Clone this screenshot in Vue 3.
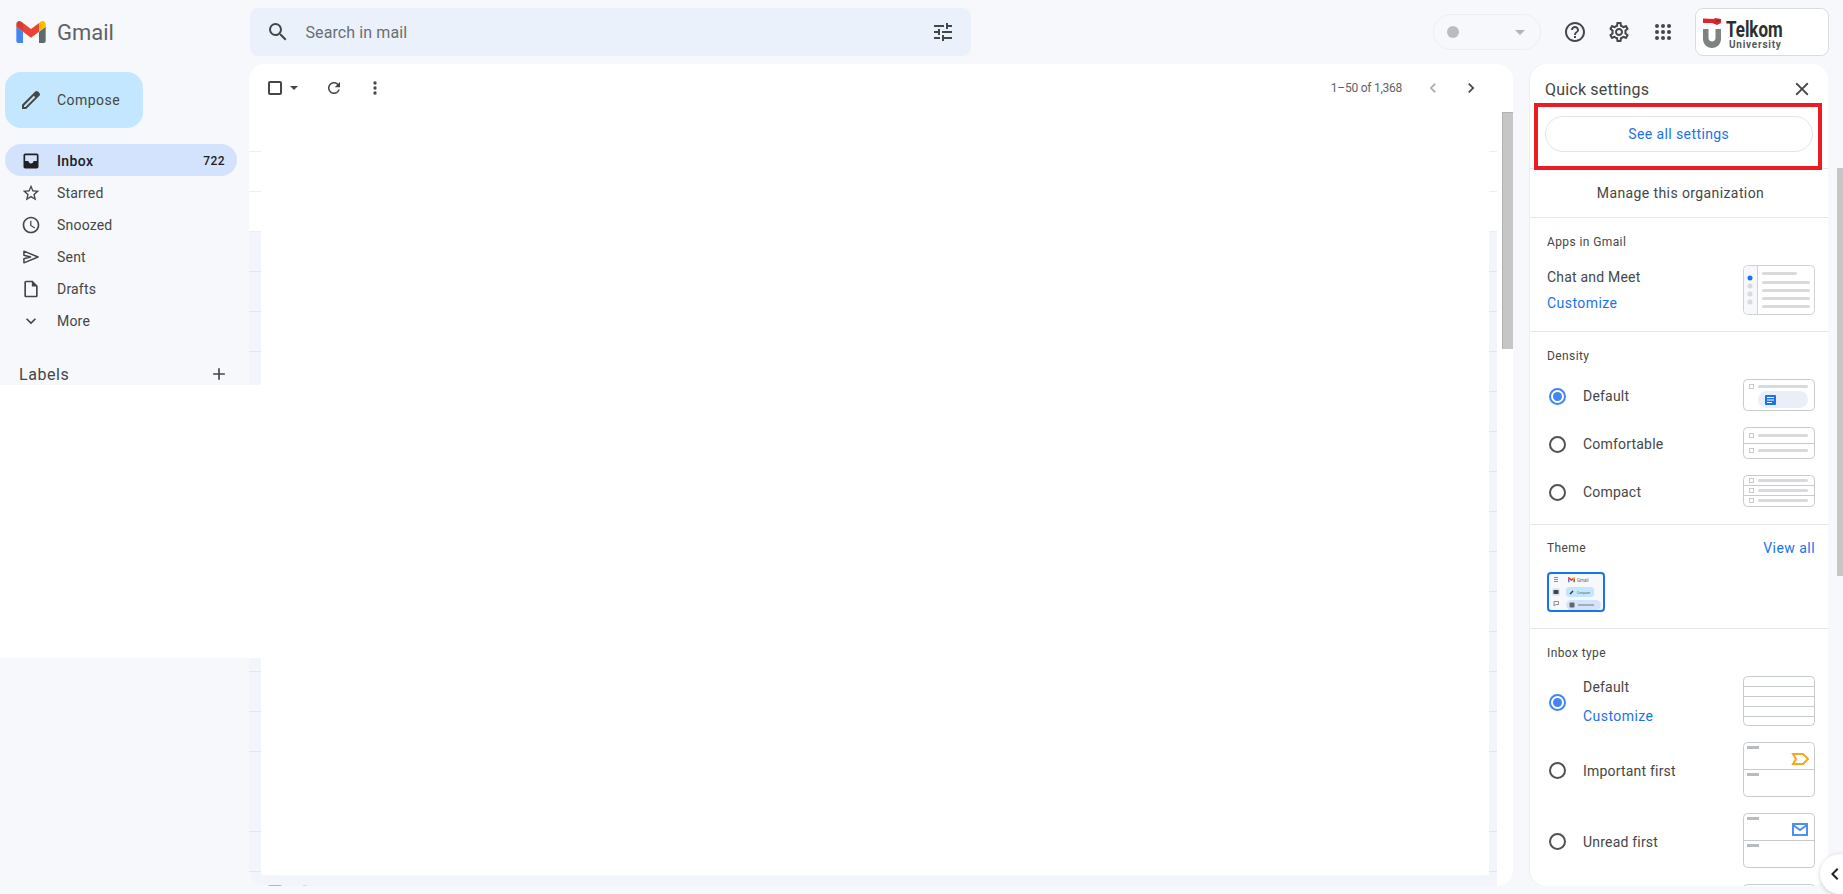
<script setup>
const navItems = [
  { label: "Inbox", count: 722, active: true, icon: "M19 3H5c-1.1 0-2 .9-2 2v14c0 1.1.9 2 2 2h14c1.1 0 2-.9 2-2V5c0-1.1-.9-2-2-2zm0 9h-4c0 1.66-1.35 3-3 3s-3-1.34-3-3H5V5h14v7z" },
  { label: "Starred", icon: "M22 9.24l-7.19-.62L12 2 9.19 8.63 2 9.24l5.46 4.73L5.82 21 12 17.27 18.18 21l-1.63-7.03L22 9.24zM12 15.4l-3.76 2.27 1-4.28-3.32-2.88 4.38-.38L12 6.1l1.71 4.04 4.38.38-3.32 2.88 1 4.28L12 15.4z" },
  { label: "Snoozed", icon: "M11.99 2C6.47 2 2 6.48 2 12s4.47 10 9.99 10C17.52 22 22 17.52 22 12S17.52 2 11.99 2zM12 20c-4.42 0-8-3.58-8-8s3.58-8 8-8 8 3.58 8 8-3.58 8-8 8zm.5-13H11v6l5.25 3.15.75-1.23-4.5-2.67z" },
  { label: "Sent", outline: true, icon: "M3.500 5L20.500 12L3.500 19V14.200L11.500 12L3.500 9.800z" },
  { label: "Drafts", icon: "M14 2H6c-1.1 0-1.99.9-1.99 2L4 20c0 1.1.89 2 1.99 2H18c1.1 0 2-.9 2-2V8l-6-6zM6 20V4h7v5h5v11H6z" },
  { label: "More", icon: "M16.59 8.59L12 13.17 7.41 8.59 6 10l6 6 6-6z" },
];

// rows sit behind the white cover, only their edges show
const rows = Array.from({ length: 20 }, (_, i) => ({
  id: i,
  read: i < 3,
  noLine: i === 16,
}));

const densities = [
  { id: "default", label: "Default", checked: true },
  { id: "comfortable", label: "Comfortable" },
  { id: "compact", label: "Compact" },
];

// the fourth type is only visible as the top edge of its preview
const inboxTypes = [
  { id: "default", label: "Default", link: "Customize", checked: true },
  { id: "important", label: "Important first" },
  { id: "unread", label: "Unread first" },
  { id: "next", label: "" },
];
</script>

<template>
  <div class="app">
    <header class="topbar">
      <div class="brand">
        <svg class="gmail-logo" viewBox="52 42 88 66">
          <path fill="#4285f4" d="M58 108h14V74L52 59v43c0 3.32 2.69 6 6 6" />
          <path fill="#5f6b68" d="M120 108h14c3.32 0 6-2.69 6-6V59l-20 15" />
          <path fill="#fbbc04" d="M120 48v26l20-15v-8c0-7.42-8.47-11.65-14.4-7.2" />
          <path fill="#ea4335" d="M72 74V48l24 18 24-18v26L96 92" />
          <path fill="#db3a2f" d="M52 51v8l20 15V48l-5.6-4.2c-5.94-4.45-14.4-.22-14.4 7.2" />
        </svg>
        <span class="brand-name">Gmail</span>
      </div>
      <div class="search">
        <svg class="icon" viewBox="0 0 24 24"><path d="M15.5 14h-.79l-.28-.27A6.471 6.471 0 0 0 16 9.5 6.5 6.5 0 1 0 9.5 16c1.61 0 3.09-.59 4.23-1.57l.27.28v.79l5 4.99L20.49 19l-4.99-5zm-6 0C7.01 14 5 11.99 5 9.5S7.01 5 9.5 5 14 7.01 14 9.5 11.99 14 9.5 14z" /></svg>
        <span class="search-text">Search in mail</span>
        <svg class="icon tune" viewBox="0 0 24 24"><path d="M3 17v2h6v-2H3zM3 5v2h10V5H3zm10 16v-2h8v-2h-8v-2h-2v6h2zM7 9v2H3v2h4v2h2V9H7zm14 4v-2H11v2h10zm-6-4h2V7h4V5h-4V3h-2v6z" /></svg>
      </div>
      <div class="top-right">
        <div class="status">
          <span class="status-dot"></span>
          <span class="caret status-caret"></span>
        </div>
        <svg class="icon top-icon" viewBox="0 0 24 24"><path d="M11 18h2v-2h-2v2zm1-16C6.48 2 2 6.48 2 12s4.48 10 10 10 10-4.48 10-10S17.52 2 12 2zm0 18c-4.41 0-8-3.59-8-8s3.59-8 8-8 8 3.59 8 8-3.59 8-8 8zm0-14c-2.21 0-4 1.79-4 4h2c0-1.1.9-2 2-2s2 .9 2 2c0 2-3 1.75-3 5h2c0-2.25 3-2.5 3-5 0-2.21-1.79-4-4-4z" /></svg>
        <svg class="icon top-icon" viewBox="0 0 24 24"><path d="M19.43 12.98c.04-.32.07-.64.07-.98 0-.34-.03-.66-.07-.98l2.11-1.65c.19-.15.24-.42.12-.64l-2-3.46c-.09-.16-.26-.25-.44-.25-.06 0-.12.01-.17.03l-2.49 1c-.52-.4-1.08-.73-1.69-.98l-.38-2.65C14.46 2.18 14.25 2 14 2h-4c-.25 0-.46.18-.49.42l-.38 2.65c-.61.25-1.17.59-1.69.98l-2.49-1c-.06-.02-.12-.03-.18-.03-.17 0-.34.09-.43.25l-2 3.46c-.13.22-.07.49.12.64l2.11 1.65c-.04.32-.07.65-.07.98 0 .33.03.66.07.98l-2.11 1.65c-.19.15-.24.42-.12.64l2 3.46c.09.16.26.25.44.25.06 0 .12-.01.17-.03l2.49-1c.52.4 1.08.73 1.69.98l.38 2.65c.03.24.24.42.49.42h4c.25 0 .46-.18.49-.42l.38-2.65c.61-.25 1.17-.59 1.69-.98l2.49 1c.06.02.12.03.18.03.17 0 .34-.09.43-.25l2-3.46c.12-.22.07-.49-.12-.64l-2.11-1.65zm-1.98-1.71c.04.31.05.52.05.73 0 .21-.02.43-.05.73l-.14 1.13.89.7 1.08.84-.7 1.21-1.27-.51-1.04-.42-.9.68c-.43.32-.84.56-1.25.73l-1.06.43-.16 1.13-.2 1.35h-1.4l-.19-1.35-.16-1.13-1.06-.43c-.43-.18-.83-.41-1.23-.71l-.91-.7-1.06.43-1.27.51-.7-1.21 1.08-.84.89-.7-.14-1.13c-.03-.31-.05-.54-.05-.74s.02-.43.05-.73l.14-1.13-.89-.7-1.08-.84.7-1.21 1.27.51 1.04.42.9-.68c.43-.32.84-.56 1.25-.73l1.06-.43.16-1.13.2-1.35h1.39l.19 1.35.16 1.13 1.06.43c.43.18.83.41 1.23.71l.91.7 1.06-.43 1.27-.51.7 1.21-1.07.85-.89.7.14 1.13zM12 8c-2.21 0-4 1.79-4 4s1.79 4 4 4 4-1.79 4-4-1.79-4-4-4zm0 6c-1.1 0-2-.9-2-2s.9-2 2-2 2 .9 2 2-.9 2-2 2z" /></svg>
        <svg class="icon top-icon" viewBox="0 0 24 24">
          <circle v-for="n in 9" :key="n" :cx="6 + ((n - 1) % 3) * 6" :cy="6 + Math.floor((n - 1) / 3) * 6" r="2" />
        </svg>
        <div class="org-logo">
          <svg class="org-mark" viewBox="0 0 18 30">
            <path fill="#e5202a" d="M0 .5L11 1l1-1 6 1v4l-4 2-5-2H0z" />
            <circle cx="13.500" cy="3.500" r=".8" fill="#333" />
            <circle cx="15.500" cy="2.500" r=".8" fill="#333" />
            <path fill="#7e8281" d="M0 11h5.500v9c0 2.200 1.600 3.500 3.500 3.500s3.500-1.300 3.500-3.500v-9H18v10c0 5-4 9-9 9s-9-4-9-9z" />
          </svg>
          <div class="org-text">
            <span class="org-title">Telkom</span>
            <span class="org-sub">University</span>
          </div>
        </div>
      </div>
    </header>

    <div class="body">
      <nav class="nav">
        <button class="compose">
          <svg class="icon" viewBox="0 0 24 24"><path d="M20.41 4.94l-1.35-1.35c-.78-.78-2.05-.78-2.83 0L3 16.82V21h4.18L20.41 7.77c.79-.78.79-2.05 0-2.83zm-14 14.12L5 19v-1.36l9.82-9.82 1.41 1.41-9.82 9.83z" /></svg>
          <span>Compose</span>
        </button>
        <ul class="nav-list">
          <li v-for="item in navItems" :key="item.label" :class="{ active: item.active }">
            <svg class="icon nav-icon" viewBox="0 0 24 24"><path :d="item.icon" :class="{ outline: item.outline }" /></svg>
            <span class="nav-label">{{ item.label }}</span>
            <span v-if="item.count" class="nav-count">{{ item.count }}</span>
          </li>
        </ul>
        <div class="labels">
          <span>Labels</span>
          <svg class="icon" viewBox="0 0 24 24"><path d="M19 13h-6v6h-2v-6H5v-2h6V5h2v6h6v2z" /></svg>
        </div>
      </nav>

      <main class="mail">
        <div class="toolbar">
          <span class="checkbox"></span>
          <span class="caret"></span>
          <svg class="icon tool refresh" viewBox="0 0 24 24"><path d="M17.65 6.35C16.2 4.9 14.21 4 12 4c-4.42 0-7.99 3.58-7.99 8s3.57 8 7.99 8c3.73 0 6.84-2.55 7.73-6h-2.08c-.82 2.33-3.04 4-5.65 4-3.31 0-6-2.69-6-6s2.69-6 6-6c1.66 0 3.14.69 4.22 1.78L13 11h7V4l-2.35 2.35z" /></svg>
          <svg class="icon tool dots" viewBox="0 0 24 24"><circle cx="12" cy="6" r="2" /><circle cx="12" cy="12" r="2" /><circle cx="12" cy="18" r="2" /></svg>
          <span class="range">1–50 of 1,368</span>
          <svg class="icon tool prev" viewBox="0 0 24 24"><path d="M15.41 7.41L14 6l-6 6 6 6 1.41-1.41L10.83 12z" /></svg>
          <svg class="icon tool next" viewBox="0 0 24 24"><path d="M10 6L8.59 7.41 13.17 12l-4.58 4.59L10 18l6-6z" /></svg>
        </div>
        <div class="list-wrap">
          <ul class="rows">
            <li v-for="row in rows" :key="row.id" :class="{ read: row.read, 'no-line': row.noLine }">
              <span class="checkbox row-check"></span>
              <span class="row-star"></span>
            </li>
          </ul>
          <div class="gutter"><span class="thumb"></span></div>
        </div>
      </main>

      <aside class="settings">
        <div class="settings-head">
          <span>Quick settings</span>
          <svg class="icon" viewBox="0 0 24 24"><path d="M19 6.41L17.59 5 12 10.59 6.41 5 5 6.41 10.59 12 5 17.59 6.41 19 12 13.41 17.59 19 19 17.59 13.41 12z" /></svg>
        </div>
        <section class="see-all">
          <button class="see-all-btn">See all settings</button>
          <span class="highlight"></span>
        </section>
        <section class="manage">Manage this organization</section>

        <section class="group">
          <h3>Apps in Gmail</h3>
          <div class="option apps">
            <div class="option-text">
              <span>Chat and Meet</span>
              <a>Customize</a>
            </div>
            <svg class="preview" width="72" height="50" viewBox="0 0 72 50">
              <rect x=".5" y=".5" width="71" height="49" rx="4" fill="#fff" stroke="#d0d3d6" />
              <path d="M1 5a4 4 0 0 1 4-4h9v48H5a4 4 0 0 1-4-4z" fill="#f6f8fc" />
              <path d="M14.500 1v48" stroke="#d0d3d6" />
              <circle cx="7" cy="13" r="2.500" fill="#1a73e8" />
              <circle cx="7" cy="21" r="2.500" fill="#d8dadd" />
              <circle cx="7" cy="29" r="2.500" fill="#d8dadd" />
              <circle cx="7" cy="37" r="2.500" fill="#d8dadd" />
              <rect x="19" y="7" width="35" height="3" rx="1.500" fill="#d8dadd" />
              <rect x="19" y="16" width="48" height="3" rx="1.500" fill="#d8dadd" />
              <rect x="19" y="24" width="48" height="3" rx="1.500" fill="#d8dadd" />
              <rect x="19" y="32" width="48" height="3" rx="1.500" fill="#d8dadd" />
              <rect x="19" y="40" width="48" height="3" rx="1.500" fill="#d8dadd" />
            </svg>
          </div>
        </section>

        <section class="group density">
          <h3>Density</h3>
          <div class="choices">
            <div v-for="d in densities" :key="d.id" class="option">
              <span class="radio" :class="{ checked: d.checked }"></span>
              <span class="option-label">{{ d.label }}</span>
              <svg v-if="d.id === 'default'" class="preview" width="72" height="32" viewBox="0 0 72 32">
                <rect x=".5" y=".5" width="71" height="31" rx="4" fill="#fff" stroke="#c8cbce" />
                <rect x="6.500" y="5.500" width="4" height="4" fill="#fff" stroke="#c8cbce" />
                <rect x="15" y="6" width="50" height="3" rx="1.500" fill="#d8dadd" />
                <rect x="15" y="12" width="50" height="17" rx="8.500" fill="#e9eef9" />
                <rect x="22" y="16" width="11" height="10" rx="1" fill="#1a73e8" />
                <path d="M24 18.500h7M24 21h7M24 23.500h5" stroke="#fff" />
              </svg>
              <svg v-else-if="d.id === 'comfortable'" class="preview" width="72" height="32" viewBox="0 0 72 32">
                <rect x=".5" y=".5" width="71" height="31" rx="4" fill="#fff" stroke="#c8cbce" />
                <path d="M1 16.500h70" stroke="#c8cbce" />
                <rect x="6.500" y="6.500" width="4" height="4" fill="#fff" stroke="#c8cbce" />
                <rect x="6.500" y="21.500" width="4" height="4" fill="#fff" stroke="#c8cbce" />
                <rect x="15" y="7" width="50" height="3" rx="1.500" fill="#d8dadd" />
                <rect x="15" y="22" width="50" height="3" rx="1.500" fill="#d8dadd" />
              </svg>
              <svg v-else class="preview" width="72" height="32" viewBox="0 0 72 32">
                <rect x=".5" y=".5" width="71" height="31" rx="4" fill="#fff" stroke="#c8cbce" />
                <path d="M1 10.500h70M1 20.500h70" stroke="#c8cbce" />
                <rect x="6.500" y="3.500" width="4" height="4" fill="#fff" stroke="#c8cbce" />
                <rect x="6.500" y="13.500" width="4" height="4" fill="#fff" stroke="#c8cbce" />
                <rect x="6.500" y="23.500" width="4" height="4" fill="#fff" stroke="#c8cbce" />
                <rect x="15" y="4" width="50" height="3" rx="1.500" fill="#d8dadd" />
                <rect x="15" y="14" width="50" height="3" rx="1.500" fill="#d8dadd" />
                <rect x="15" y="24" width="50" height="3" rx="1.500" fill="#d8dadd" />
              </svg>
            </div>
          </div>
        </section>

        <section class="group theme">
          <div class="group-head">
            <h3>Theme</h3>
            <a>View all</a>
          </div>
          <svg class="theme-preview" width="58" height="40" viewBox="0 0 58 40">
            <rect x="1" y="1" width="56" height="38" rx="3" fill="#f6f8fc" stroke="#1a73e8" stroke-width="2" />
            <path d="M7 5.500h4M7 7.500h4M7 9.500h4" stroke="#8a8d90" />
            <rect x="5" y="16" width="8" height="8" rx="2" fill="#dce6f8" />
            <rect x="6.500" y="18" width="5" height="4" fill="#444" />
            <svg x="21" y="5" width="7" height="5.500" viewBox="52 42 88 66">
              <path fill="#4285f4" d="M58 108h14V74L52 59v43c0 3.32 2.69 6 6 6" />
              <path fill="#5f6b68" d="M120 108h14c3.32 0 6-2.69 6-6V59l-20 15" />
              <path fill="#fbbc04" d="M120 48v26l20-15v-8c0-7.42-8.47-11.65-14.4-7.2" />
              <path fill="#ea4335" d="M72 74V48l24 18 24-18v26L96 92M52 51v8l20 15V48l-5.6-4.2c-5.94-4.45-14.4-.22-14.4 7.2" />
            </svg>
            <text x="30" y="9.500" class="mini-text">Gmail</text>
            <rect x="19" y="15" width="28" height="10" rx="3" fill="#c2e7ff" />
            <path d="M23 22l3-3" stroke="#333" stroke-width="1.500" />
            <text x="30" y="21.500" class="mini-text small">Compose</text>
            <path d="M7 29.500h4.500v3H9L7 34z" fill="none" stroke="#8a8d90" />
            <rect x="19" y="28" width="35" height="10" rx="5" fill="#d3e3fd" />
            <rect x="22.500" y="30.500" width="5" height="5" rx="1" fill="#666" />
            <path d="M31 33h16" stroke="#777" />
          </svg>
        </section>

        <section class="group inbox-type">
          <h3>Inbox type</h3>
          <div class="choices">
            <div v-for="t in inboxTypes" :key="t.id" class="option">
              <span class="radio" :class="{ checked: t.checked }"></span>
              <div v-if="t.label" class="option-label" :class="{ stacked: t.link }">
                <span>{{ t.label }}</span>
                <a v-if="t.link">{{ t.link }}</a>
              </div>
              <svg v-if="t.id === 'default'" class="preview" width="72" height="50" viewBox="0 0 72 50">
                <rect x=".5" y=".5" width="71" height="49" rx="4" fill="#fff" stroke="#c8cbce" />
                <path d="M1 10.500h70M1 20.500h70M1 30.500h70M1 40.500h70" stroke="#c8cbce" />
              </svg>
              <svg v-else class="preview" width="72" height="55" viewBox="0 0 72 55">
                <rect x=".5" y=".5" width="71" height="54" rx="4" fill="#fff" stroke="#c8cbce" />
                <path d="M1 27.500h70" stroke="#c8cbce" />
                <rect x="4" y="4" width="12" height="3" fill="#b9bcbf" />
                <rect x="4" y="31" width="12" height="3" fill="#b9bcbf" />
                <path v-if="t.id === 'important'" d="M50 12h10l5 5-5 5H50l3-5z" fill="none" stroke="#f5a623" stroke-width="2" />
                <g v-if="t.id === 'unread'" fill="none" stroke="#4a90f0" stroke-width="2">
                  <rect x="50" y="11" width="14" height="11" />
                  <path d="M50 12l7 5 7-5" />
                </g>
              </svg>
            </div>
          </div>
        </section>
      </aside>
    </div>

    <!-- blanked-out areas of the screenshot -->
    <div class="cover cover-nav"></div>
    <div class="cover cover-list"></div>

    <span class="side-scroll"></span>
    <div class="collapse">
      <svg class="icon" viewBox="0 0 24 24"><path d="M15.41 7.41L14 6l-6 6 6 6 1.41-1.41L10.83 12z" /></svg>
    </div>
  </div>
</template>

<style scoped>
.app {
  position: relative;
  width: 1843px;
  height: 894px;
  overflow: hidden;
  background: #f6f8fc;
  color: #444746;
  font-family: Roboto, "Liberation Sans", sans-serif;
  font-size: 14px;
}

.icon {
  display: block;
  width: 24px;
  height: 24px;
  fill: #444746;
  flex: none;
}

/* top bar */
.topbar {
  display: flex;
  align-items: center;
  height: 64px;
}

.brand {
  display: flex;
  align-items: center;
  width: 249.5px;
  padding-left: 16px;
  box-sizing: border-box;
}

.gmail-logo {
  width: 30px;
  height: 22px;
}

.brand-name {
  margin-left: 11px;
  font-size: 22px;
  color: #5f6368;
}

.search {
  display: flex;
  align-items: center;
  width: 721px;
  height: 48px;
  padding: 0 16px;
  box-sizing: border-box;
  background: #eaf1fb;
  border-radius: 8px;
}

.search-text {
  margin-left: 16px;
  font-size: 16px;
  color: #6b6f72;
  letter-spacing: 0.1px;
}

.tune {
  margin-left: auto;
}

.top-right {
  display: flex;
  align-items: center;
  margin-left: 462.5px;
}

.status {
  display: flex;
  align-items: center;
  justify-content: space-between;
  width: 108px;
  height: 36px;
  padding: 0 15px 0 13px;
  box-sizing: border-box;
  border: 1px solid #eceef2;
  border-radius: 18px;
}

.status-dot {
  width: 12px;
  height: 12px;
  border-radius: 50%;
  background: #bcbcbc;
}

.caret {
  width: 0;
  height: 0;
  border: 5px solid transparent;
  border-top-color: #444746;
  border-bottom: 0;
}

.status-caret {
  border-top-color: #b4b4b4;
}

.top-icon {
  margin-left: 20px;
}

.top-right .top-icon:first-of-type {
  margin-left: 22px;
}

.org-logo {
  display: flex;
  gap: 5px;
  width: 134px;
  height: 48px;
  margin-left: 20px;
  padding: 9px 0 0 7px;
  box-sizing: border-box;
  background: #fff;
  border: 1px solid #dadce0;
  border-radius: 8px;
}

.org-mark {
  display: block;
  flex: none;
  width: 18px;
  height: 30px;
}

.org-text {
  display: flex;
  flex-direction: column;
  color: #2b2f33;
}

.org-title {
  font-size: 22px;
  font-weight: 700;
  line-height: 18px;
  margin-top: 3px;
  transform: scaleX(0.77);
  transform-origin: left;
}

.org-sub {
  font-size: 10px;
  font-weight: 700;
  line-height: 11px;
  margin-left: 3px;
  letter-spacing: 0.75px;
  color: #55595c;
}

/* body */
.body {
  display: flex;
  height: 822px;
}

/* left nav */
.nav {
  width: 249px;
  flex: none;
}

.compose {
  display: flex;
  align-items: center;
  gap: 14px;
  width: 138px;
  height: 56px;
  margin: 8px 0 0 5px;
  padding: 0 0 0 14px;
  background: #c2e7ff;
  border: 0;
  border-radius: 16px;
  color: #444746;
  font: 400 14px Roboto, sans-serif;
  letter-spacing: 0.45px;
}

.nav-list {
  list-style: none;
  margin: 16px 0 0;
  padding: 0;
}

.nav-list li {
  display: flex;
  align-items: center;
  width: 232px;
  height: 32px;
  margin-left: 5px;
  padding: 1px 12px 0 14px;
  box-sizing: border-box;
  border-radius: 16px;
  letter-spacing: 0.2px;
}

.nav-list li.active {
  background: #d3e3fd;
  color: #202124;
  font-weight: 500;
  letter-spacing: 0.4px;
}

.nav-list li.active .nav-icon {
  fill: #202124;
}

.nav-icon {
  width: 20px;
  height: 20px;
  margin-left: 2px;
}

.outline {
  fill: none;
  stroke: #444746;
  stroke-width: 1.8;
  stroke-linejoin: round;
}

.nav-label {
  margin-left: 16px;
}

.nav-count {
  margin-left: auto;
  font-size: 12px;
}

.labels {
  display: flex;
  align-items: center;
  justify-content: space-between;
  width: 210px;
  margin: 28px 0 0 19px;
  font-size: 16px;
  letter-spacing: 0.55px;
  color: #444746;
}

.labels .icon {
  width: 20px;
  height: 20px;
}

/* mail list */
.mail {
  display: flex;
  flex-direction: column;
  width: 1264px;
  flex: none;
  background: #fff;
  border-radius: 16px;
  overflow: hidden;
}

.toolbar {
  display: flex;
  align-items: center;
  flex: none;
  height: 48px;
  padding-left: 19px;
}

.checkbox {
  display: block;
  width: 14px;
  height: 14px;
  box-sizing: border-box;
  border: 2px solid #444746;
  border-radius: 2px;
}

.toolbar .caret {
  margin-left: 8px;
  border-width: 4px;
  border-bottom: 0;
}

.tool {
  width: 20px;
  height: 20px;
}

.refresh {
  margin-left: 27px;
  width: 18px;
  height: 18px;
}

.dots {
  margin-left: 22px;
  width: 20px;
}

.range {
  margin-left: auto;
  font-size: 12px;
  letter-spacing: -0.25px;
  color: #5f6368;
}

.prev {
  margin-left: 21px;
  fill: #a8abad;
}

.next {
  margin: 0 32px 0 18px;
}

.list-wrap {
  display: flex;
  flex: 1;
  min-height: 0;
}

.rows {
  flex: 1;
  margin: 0;
  padding: 0;
  list-style: none;
  overflow: hidden;
}

.rows li {
  display: flex;
  align-items: center;
  height: 40px;
  padding-left: 19px;
  box-sizing: border-box;
  background: #f2f5fc;
  border-bottom: 1px solid #e3e6ec;
}

.rows li.read {
  background: #fff;
  border-bottom-color: #eceef1;
}

.rows li.no-line {
  border-bottom-color: #f2f5fc;
}

.row-check {
  border-color: #b4b6b9;
}

.row-star {
  width: 4px;
  height: 14px;
  margin-left: 21px;
  background: #d9dbde;
}

.gutter {
  position: relative;
  flex: none;
  width: 16px;
}

.thumb {
  position: absolute;
  top: 0;
  right: 0;
  width: 11px;
  height: 237px;
  box-sizing: border-box;
  background: #c6c6c6;
  border-left: 1px solid #b2b2b2;
  border-top: 1px solid #b2b2b2;
}

/* quick settings */
.settings {
  width: 298px;
  flex: none;
  margin-left: 17px;
  background: #fff;
  border-radius: 16px;
  overflow: hidden;
  box-shadow: -1px 0 0 #eceef2;
}

.settings-head {
  display: flex;
  align-items: center;
  justify-content: space-between;
  height: 40px;
  padding: 10px 15px 0 15px;
  box-sizing: border-box;
  font-size: 16px;
  letter-spacing: 0.2px;
  color: #444746;
}

.settings-head .icon {
  width: 22px;
  height: 22px;
}

.see-all {
  position: relative;
  padding: 12px 15.5px 16px 15px;
  border-bottom: 1px solid #e4e6e8;
}

.see-all-btn {
  display: block;
  width: 100%;
  height: 36px;
  background: #fff;
  border: 1px solid #e2e4e6;
  border-radius: 18px;
  color: #1a73e8;
  font: 400 14px Roboto, sans-serif;
  letter-spacing: 0.4px;
}

.highlight {
  position: absolute;
  left: 4px;
  top: -1px;
  width: 288px;
  height: 67px;
  box-sizing: border-box;
  border: 4.5px solid #ed1c24;
}

.manage {
  height: 48px;
  padding-left: 3px;
  line-height: 48px;
  text-align: center;
  letter-spacing: 0.4px;
  border-bottom: 1px solid #e4e6e8;
}

.group {
  padding: 16px 13px 16px 17px;
  border-bottom: 1px solid #e4e6e8;
}

.group h3 {
  margin: 0;
  font-size: 12px;
  font-weight: 400;
  line-height: 16px;
  letter-spacing: 0.4px;
  color: #444746;
}

.group a {
  color: #1a73e8;
  letter-spacing: 0.45px;
}

.option {
  display: flex;
  align-items: center;
}

.apps {
  margin-top: 15px;
  justify-content: space-between;
}

.option-text {
  display: flex;
  flex-direction: column;
  gap: 10px;
  letter-spacing: 0.2px;
}

.choices {
  display: flex;
  flex-direction: column;
  gap: 16px;
  margin-top: 15px;
}

.density {
  padding-bottom: 17px;
}

.radio {
  position: relative;
  flex: none;
  width: 17px;
  height: 17px;
  margin: 2px 0 0 2px;
  box-sizing: border-box;
  border: 2px solid #4f5355;
  border-radius: 50%;
}

.radio.checked {
  border-color: #4285f4;
}

.radio.checked::after {
  content: "";
  position: absolute;
  inset: 2px;
  background: #4285f4;
  border-radius: 50%;
}

.option-label {
  margin: 2px 0 0 17px;
  letter-spacing: 0.2px;
}

.option-label.stacked {
  display: flex;
  flex-direction: column;
  gap: 13px;
  margin-top: 0;
}

.preview {
  display: block;
  flex: none;
  margin-left: auto;
}

.group-head {
  display: flex;
  align-items: center;
  justify-content: space-between;
  height: 16px;
}

.theme {
  padding-top: 15px;
}

.theme-preview {
  display: block;
  margin-top: 16px;
}

.mini-text {
  font-size: 4.5px;
  fill: #666;
}

.mini-text.small {
  font-size: 3px;
}

.inbox-type {
  border-bottom: 0;
}

/* blanked areas and things floating over the page */
.cover {
  position: absolute;
  background: #fff;
}

.cover-nav {
  left: 0;
  top: 385px;
  width: 261px;
  height: 273px;
}

.cover-list {
  left: 261px;
  top: 112px;
  width: 1228px;
  height: 763px;
}

.side-scroll {
  position: absolute;
  left: 1837px;
  top: 168px;
  width: 6px;
  height: 408px;
  background: #c6c6c6;
}

.collapse {
  position: absolute;
  left: 1820px;
  top: 854px;
  width: 40px;
  height: 40px;
  padding-left: 3px;
  display: flex;
  align-items: center;
  box-sizing: border-box;
  background: #fff;
  border-radius: 50%;
  box-shadow: 0 1px 4px rgba(60, 64, 67, 0.25);
}

.collapse .icon {
  fill: #202124;
}
</style>
